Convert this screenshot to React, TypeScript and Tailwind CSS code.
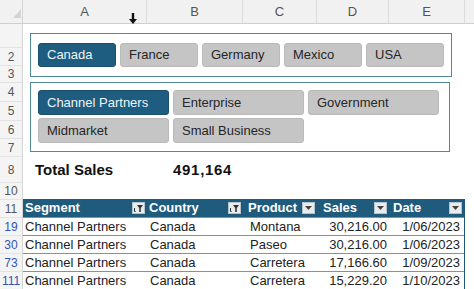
const font = "font-['Liberation_Sans',Arial,sans-serif]"

const colHeads = [
  { l: 'A', w: 'w-[124px]' },
  { l: 'B', w: 'w-[96px]' },
  { l: 'C', w: 'w-[74px]' },
  { l: 'D', w: 'w-[72px]' },
  { l: 'E', w: 'w-[76px]' },
]

const rowHeads = [
  { n: '', h: 'h-[24px]', blue: false },
  { n: '2', h: 'h-[18px]', blue: false },
  { n: '3', h: 'h-[17px]', blue: false },
  { n: '4', h: 'h-[19px]', blue: false },
  { n: '5', h: 'h-[19px]', blue: false },
  { n: '6', h: 'h-[18px]', blue: false },
  { n: '7', h: 'h-[18px]', blue: false },
  { n: '8', h: 'h-[26px]', blue: false },
  { n: '10', h: 'h-[17px]', blue: false },
  { n: '11', h: 'h-[18px]', blue: false },
  { n: '19', h: 'h-[18px]', blue: true },
  { n: '30', h: 'h-[18px]', blue: true },
  { n: '73', h: 'h-[18px]', blue: true },
  { n: '111', h: 'h-[18px]', blue: true },
]

const countries = ['Canada', 'France', 'Germany', 'Mexico', 'USA']
const segments = ['Channel Partners', 'Enterprise', 'Government', 'Midmarket', 'Small Business']

const rows = [
  ['Channel Partners', 'Canada', 'Montana', '30,216.00', '1/06/2023'],
  ['Channel Partners', 'Canada', 'Paseo', '30,216.00', '1/06/2023'],
  ['Channel Partners', 'Canada', 'Carretera', '17,166.60', '1/09/2023'],
  ['Channel Partners', 'Canada', 'Carretera', '15,229.20', '1/10/2023'],
]

const SlicerButton = ({ label, active }: { label: string; active: boolean }) => (
  <div
    className={
      active
        ? 'flex items-center rounded-[3px] border border-[#1a506d] bg-[#1f5d80] pl-[8px] text-[13px] text-[#eef4f8]'
        : 'flex items-center rounded-[3px] border border-[#b9b9b9] bg-[#c5c5c5] pl-[8px] text-[13px] text-[#262626]'
    }
  >
    {label}
  </div>
)

const FilterIcon = () => (
  <div className="flex h-[12px] w-[13px] items-center justify-center border border-[#b8c4cc] bg-[#e9ecee]">
    <svg width="11" height="9" viewBox="0 0 11 9">
      <path d="M1 6 L2.5 8 L2.5 8 M1.5 7.5 L1.5 4" stroke="#333" strokeWidth="1" fill="none" />
      <path d="M4 1 H10 L7.8 4 V8 H6.2 V4 Z" fill="#333" />
    </svg>
  </div>
)

const DropIcon = () => (
  <div className="flex h-[12px] w-[13px] items-center justify-center border border-[#b8c4cc] bg-[#e9ecee]">
    <svg width="7" height="4" viewBox="0 0 7 4">
      <path d="M0 0 H7 L3.5 4 Z" fill="#444" />
    </svg>
  </div>
)

const widths = ['w-[124px]', 'w-[96px]', 'w-[74px]', 'w-[72px]', 'w-[75px]']

export default function App() {
  const headers = [
    { t: 'Segment', icon: <FilterIcon />, pl: 'pl-[2px]' },
    { t: 'Country', icon: <FilterIcon />, pl: 'pl-[2px]' },
    { t: 'Product', icon: <DropIcon />, pl: 'pl-[5px]' },
    { t: 'Sales', icon: <DropIcon />, pl: 'pl-[6px]' },
    { t: 'Date', icon: <DropIcon />, pl: 'pl-[4px]' },
  ]
  return (
    <div className={`relative h-[289px] w-[474px] overflow-hidden bg-white ${font}`}>
      {/* column headers */}
      <div className="flex h-[24px] border-b border-[#cfcfcf] bg-[#f1f1f1] text-[13px] text-[#555]">
        <div className="relative w-[23px] border-r border-[#d6d6d6]">
          <svg className="absolute left-[13px] top-[9px]" width="8" height="9" viewBox="0 0 8 9">
            <path d="M8 0 V9 H0 Z" fill="#d4d4d4" />
          </svg>
        </div>
        {colHeads.map((c) => (
          <div key={c.l} className={`${c.w} flex items-center justify-center border-r border-[#dcdcdc]`}>
            {c.l}
          </div>
        ))}
        <div className="flex-1" />
      </div>

      <div className="flex">
        {/* row headers */}
        <div className="w-[23px] border-r border-[#d6d6d6] bg-[#f4f4f4] text-[12px]">
          {rowHeads.map((r, i) => (
            <div
              key={i}
              className={`${r.h} flex items-center justify-center border-b border-[#e3e3e3] ${r.blue ? 'text-[#2f55b5]' : 'text-[#555]'}`}
            >
              {r.n}
            </div>
          ))}
        </div>

        {/* sheet content */}
        <div className="flex-1">
          <div className="ml-[7px] mt-[9px] w-[422px] border border-[#4f8a98] px-[7px] pb-[9px] pt-[9px]">
            <div className="grid h-[24px] grid-cols-5 gap-[4px]">
              {countries.map((c) => (
                <SlicerButton key={c} label={c} active={c === 'Canada'} />
              ))}
            </div>
          </div>

          <div className="ml-[7px] mt-[5px] h-[70px] w-[420px] border border-[#4f8a98] pl-[7px] pt-[7px]">
            <div className="grid w-[401px] grid-cols-3 grid-rows-[25px_25px] gap-x-[4px] gap-y-[3px]">
              {segments.map((s) => (
                <SlicerButton key={s} label={s} active={s === 'Channel Partners'} />
              ))}
            </div>
          </div>

          <div className="mt-[5px] flex h-[26px] items-center pl-[12px] text-[15px] font-bold text-[#111]">
            <span className="w-[138px]">Total Sales</span>
            <span className="tracking-[0.7px]">491,164</span>
          </div>

          <div className="mt-[16px] w-[442px] border-r border-[#1d5878]">
            <div className="flex h-[18px] bg-[#1f5b7c] text-[13px] font-bold text-white">
              {headers.map((h, i) => (
                <div key={h.t} className={`${widths[i]} flex items-center justify-between ${h.pl} pr-[2px]`}>
                  <span>{h.t}</span>
                  {h.icon}
                </div>
              ))}
            </div>
            {rows.map((r, ri) => (
              <div key={ri} className="flex h-[18px] border-t border-[#6f98b8] text-[13px] text-[#222]">
                <div className={`${widths[0]} flex items-center pl-[2px]`}>{r[0]}</div>
                <div className={`${widths[1]} flex items-center pl-[3px]`}>{r[1]}</div>
                <div className={`${widths[2]} flex items-center pl-[7px]`}>{r[2]}</div>
                <div className={`${widths[3]} flex items-center justify-end pr-[2px]`}>{r[3]}</div>
                <div className={`${widths[4]} flex items-center justify-end pr-[4px]`}>{r[4]}</div>
              </div>
            ))}
          </div>
        </div>
      </div>

      {/* column select cursor */}
      <svg className="absolute left-[129px] top-[13px]" width="8" height="11" viewBox="0 0 8 11">
        <path d="M2.8 0 H5.2 V6 H8 L4 11 L0 6 H2.8 Z" fill="#111" />
      </svg>
    </div>
  )
}
